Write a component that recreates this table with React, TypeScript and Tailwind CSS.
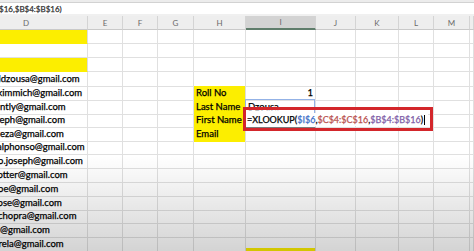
const COLS =
  'grid grid-cols-[88px_35px_35px_36px_52px_70px_40px_43px_35px_36px_4px]';

const letters = ['D', 'E', 'F', 'G', 'H', 'I', 'J', 'K', 'L', 'M', ''];

type Row = {
  h: string;
  dYellow?: boolean;
  email?: string;
  ml?: string;
  label?: string;
  kind?: 'one' | 'name' | 'formula' | 'yellow';
};

const rows: Row[] = [
  { h: 'h-[14px]', dYellow: true },
  { h: 'h-[14px]' },
  { h: 'h-[14px]', dYellow: true },
  { h: 'h-[14px]', email: 'ldzousa@gmail.com', ml: '-ml-[1.5px]' },
  { h: 'h-[14px]', email: 'kimmich@gmail.com', ml: '-ml-[2.5px]', label: 'Roll No', kind: 'one' },
  { h: 'h-[13px]', email: 'ntly@gmail.com', ml: 'ml-0', label: 'Last Name', kind: 'name' },
  { h: 'h-[14px]', email: 'eph@gmail.com', ml: '-ml-[0.5px]', label: 'First Name', kind: 'formula' },
  { h: 'h-[13px]', email: 'eza@gmail.com', ml: 'ml-0', label: 'Email' },
  { h: 'h-[14px]', email: 'alphonso@gmail.com', ml: '-ml-[3px]' },
  { h: 'h-[14px]', email: 'o.joseph@gmail.com', ml: '-ml-[2px]' },
  { h: 'h-[14px]', email: 'otter@gmail.com', ml: '-ml-[2.5px]' },
  { h: 'h-[14px]', email: 'oe@gmail.com', ml: '-ml-[2px]' },
  { h: 'h-[13px]', email: 'ose@gmail.com', ml: '-ml-[2.5px]' },
  { h: 'h-[14px]', email: 'chopra@gmail.com', ml: '-ml-[2px]' },
  { h: 'h-[14px]', email: '@gmail.com', ml: 'ml-0' },
  { h: 'h-[11px]', email: 'rela@gmail.com', ml: '-ml-[1.5px]' },
  { h: 'h-[14px]', kind: 'yellow' },
];

function Cell({ yellow, className = '', children }: { yellow?: boolean; className?: string; children?: React.ReactNode }) {
  return (
    <div
      className={`flex items-center border-r border-b ${
        yellow ? 'bg-[#fcee00] border-b-[#fcee00] border-r-[#dcdcdc]' : 'border-[#e0e0e0]'
      } ${className}`}
    >
      {children}
    </div>
  );
}

function ColumnI({ kind }: { kind?: Row['kind'] }) {
  if (kind === 'one') {
    return <Cell className="justify-end pr-[2px]">1</Cell>;
  }
  if (kind === 'name') {
    return (
      <Cell className="relative pl-[2px]">
        Dzousa
        <div className="absolute -left-[1px] -top-[1px] right-0 bottom-0 border-[1.5px] border-[#93b2e6]" />
      </Cell>
    );
  }
  if (kind === 'formula') {
    return (
      <Cell className="relative border-b-[#7b7b7b]">
        <div className="absolute left-0 top-0 z-10 h-[13px] flex items-center whitespace-nowrap bg-white pl-[1px] pr-[3px] text-[9px]">
          <span>=XLOOKUP(</span>
          <span className="text-[#3f70c8]">$I$6</span>
          <span>,</span>
          <span className="text-[#b9524f]">$C$4:$C$16</span>
          <span>,</span>
          <span className="text-[#8060a8]">$B$4:$B$16</span>
          <span>)</span>
          <span className="ml-[1px] w-px h-[10px] bg-black" />
        </div>
      </Cell>
    );
  }
  return <Cell yellow={kind === 'yellow'} />;
}

export default function App() {
  return (
    <div className="relative w-[474px] h-[251px] overflow-hidden bg-white font-['Lato',sans-serif] text-[9.5px] text-black [-webkit-text-stroke:0.25px_currentColor]">
      {/* formula bar */}
      <div className="h-[2px] bg-[#ececec]" />
      <div className="h-[12px] flex items-center border-t border-[#d2d2d2] bg-white">
        <span className="-ml-[1px] whitespace-nowrap text-[8px] text-[#333]">$16,$B$4:$B$16)</span>
      </div>
      <div className="h-[2px] bg-[#f0f0f0]" />

      {/* column headers */}
      <div className={`${COLS} h-[14px] bg-[#eeeeee] text-[8px] text-[#6a6a6a] [-webkit-text-stroke:0px]`}>
        {letters.map((l, i) => (
          <div
            key={i}
            className={`flex items-center border-r border-[#d4d4d4] ${
              l === 'D' ? 'justify-start pl-[23px]' : 'justify-center'
            } ${l === 'I' ? 'bg-[#d3d3d3] border-b-2 border-b-[#5f7d6b]' : 'border-b border-b-[#c9c9c9]'}`}
          >
            {l}
          </div>
        ))}
      </div>

      {/* sheet body */}
      {rows.map((r, i) => (
        <div key={i} className={`${COLS} ${r.h}`}>
          <Cell yellow={r.dYellow}>
            {r.email && <span className={`whitespace-nowrap ${r.ml}`}>{r.email}</span>}
          </Cell>
          <Cell />
          <Cell />
          <Cell />
          <Cell yellow={!!r.label} className="pl-[2px] whitespace-nowrap">
            {r.label}
          </Cell>
          <ColumnI kind={r.kind} />
          <Cell />
          <Cell />
          <Cell />
          <Cell />
          <Cell />
        </div>
      ))}

      {/* annotation box */}
      <div className="absolute left-[243px] top-[107px] z-20 w-[190px] h-[24px] border-[3px] border-[#d3262b]" />

      {/* video vignette at the bottom */}
      <div className="pointer-events-none absolute inset-x-0 bottom-0 z-30 h-[95px] bg-linear-to-b from-transparent to-black/[0.17]" />
    </div>
  );
}
